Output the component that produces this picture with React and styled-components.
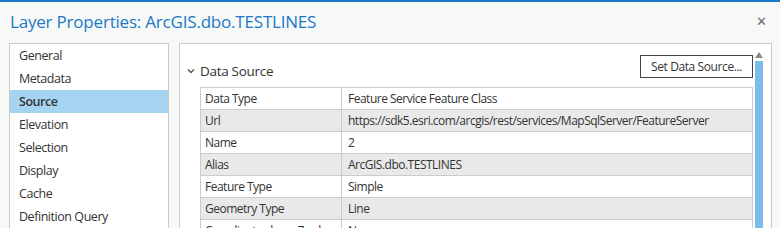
import React from 'react'
import styled, { createGlobalStyle } from 'styled-components'

const GlobalStyle = createGlobalStyle`
  html, body { margin: 0; padding: 0; }
  body {
    background: #f7f8f8;
    font-family: "Open Sans", "Noto Sans", sans-serif;
    color: #333;
  }
`

const Window = styled.div`
  display: flex;
  flex-direction: column;
  width: 780px;
  height: 228px;
  overflow: hidden;
  border-top: 2px solid #1e79c6;
  box-sizing: border-box;
  background: #f7f8f8;
`

const TitleBar = styled.div`
  display: flex;
  flex-shrink: 0;
  align-items: center;
  justify-content: space-between;
  height: 41px;
  padding: 0 13px 2px 10px;
  box-sizing: border-box;
`

const Title = styled.h1`
  margin: 0;
  font-size: 17px;
  font-weight: 400;
  color: #2178c4;
  letter-spacing: -0.2px;
`

const Close = styled.span`
  font-size: 13px;
  color: #6a6a6a;
  line-height: 1;
`

const Body = styled.div`
  display: flex;
  flex: 1;
  padding: 0 8px 0 9px;
  gap: 10px;
  min-height: 0;
`

const NavList = styled.ul`
  list-style: none;
  flex-shrink: 0;
  margin: 0;
  padding: 0;
  width: 160px;
  box-sizing: border-box;
  background: #fff;
  border: 1px solid #cbcbcb;
  border-bottom: none;
`

const NavItem = styled.li`
  height: 23px;
  line-height: 23px;
  padding-left: 9px;
  font-size: 12.5px;
  letter-spacing: -0.45px;
  font-weight: ${p => (p.active ? 600 : 400)};
  background: ${p => (p.active ? '#a5d4f1' : 'transparent')};
  color: #333;
`

const Panel = styled.div`
  flex: 1;
  display: flex;
  background: #fff;
  border: 1px solid #cbcbcb;
  border-bottom: none;
  padding: 0 8px 0 7px;
  gap: 2px;
  min-width: 0;
`

const Content = styled.div`
  flex: 1;
  display: flex;
  flex-direction: column;
  min-width: 0;
`

const HeaderRow = styled.div`
  display: flex;
  flex-shrink: 0;
  justify-content: space-between;
  align-items: flex-start;
  height: 43px;
`

const SectionTitle = styled.div`
  display: flex;
  align-items: center;
  gap: 5px;
  margin-top: 18px;
  font-size: 13.5px;
  letter-spacing: -0.3px;
  color: #333;
`

const Button = styled.button`
  margin-top: 11px;
  height: 23px;
  width: 113px;
  padding: 0;
  background: #fff;
  border: 1px solid #444;
  font-family: inherit;
  font-size: 12px;
  letter-spacing: -0.4px;
  color: #333;
`

const Table = styled.table`
  flex-shrink: 0;
  margin-left: 13px;
  border-collapse: collapse;
  table-layout: fixed;
  font-size: 12px;
  letter-spacing: -0.5px;
  width: 553px;
  border: 1px solid #cbcbcb;
`

const Row = styled.tr`
  background: ${p => (p.shaded ? '#e9e9e9' : '#fff')};
`

const Cell = styled.td`
  height: 21px;
  padding: 0 0 0 ${p => p.pl || '4px'};
  border-bottom: 1px solid #cbcbcb;
  border-right: 1px solid #cbcbcb;
  width: ${p => p.w || 'auto'};
  white-space: nowrap;
  overflow: hidden;
  color: #333;
`

const ScrollTrack = styled.div`
  width: 8px;
  flex-shrink: 0;
  display: flex;
  flex-direction: column;
  align-items: center;
  padding-top: 8px;
`

const ScrollThumb = styled.div`
  width: 8px;
  flex: 1;
  margin-top: 3px;
  background: #7bbde8;
`

const items = ['General', 'Metadata', 'Source', 'Elevation', 'Selection', 'Display', 'Cache', 'Definition Query']

const rows = [
  ['Data Type', 'Feature Service Feature Class'],
  ['Url', 'https://sdk5.esri.com/arcgis/rest/services/MapSqlServer/FeatureServer'],
  ['Name', '2'],
  ['Alias', 'ArcGIS.dbo.TESTLINES'],
  ['Feature Type', 'Simple'],
  ['Geometry Type', 'Line'],
  ['Coordinates have Z values', 'No'],
]

export default function App() {
  return (
    <>
      <GlobalStyle />
      <Window>
        <TitleBar>
          <Title>Layer Properties: ArcGIS.dbo.TESTLINES</Title>
          <Close>✕</Close>
        </TitleBar>
        <Body>
          <NavList>
            {items.map(it => (
              <NavItem key={it} active={it === 'Source'}>{it}</NavItem>
            ))}
          </NavList>
          <Panel>
            <Content>
              <HeaderRow>
                <SectionTitle>
                  <svg width="8" height="6" viewBox="0 0 8 6">
                    <path d="M1 1.5 L4 4.5 L7 1.5" fill="none" stroke="#555" strokeWidth="1.4" />
                  </svg>
                  Data Source
                </SectionTitle>
                <Button>Set Data Source...</Button>
              </HeaderRow>
              <Table>
                <tbody>
                  {rows.map((r, i) => (
                    <Row key={r[0]} shaded={i % 2 === 1}>
                      <Cell w="136px">{r[0]}</Cell>
                      <Cell pl="6px">{r[1]}</Cell>
                    </Row>
                  ))}
                </tbody>
              </Table>
            </Content>
            <ScrollTrack>
              <svg width="8" height="6" viewBox="0 0 8 6">
                <path d="M4 0 L8 6 L0 6 Z" fill="#888" />
              </svg>
              <ScrollThumb />
            </ScrollTrack>
          </Panel>
        </Body>
      </Window>
    </>
  )
}
